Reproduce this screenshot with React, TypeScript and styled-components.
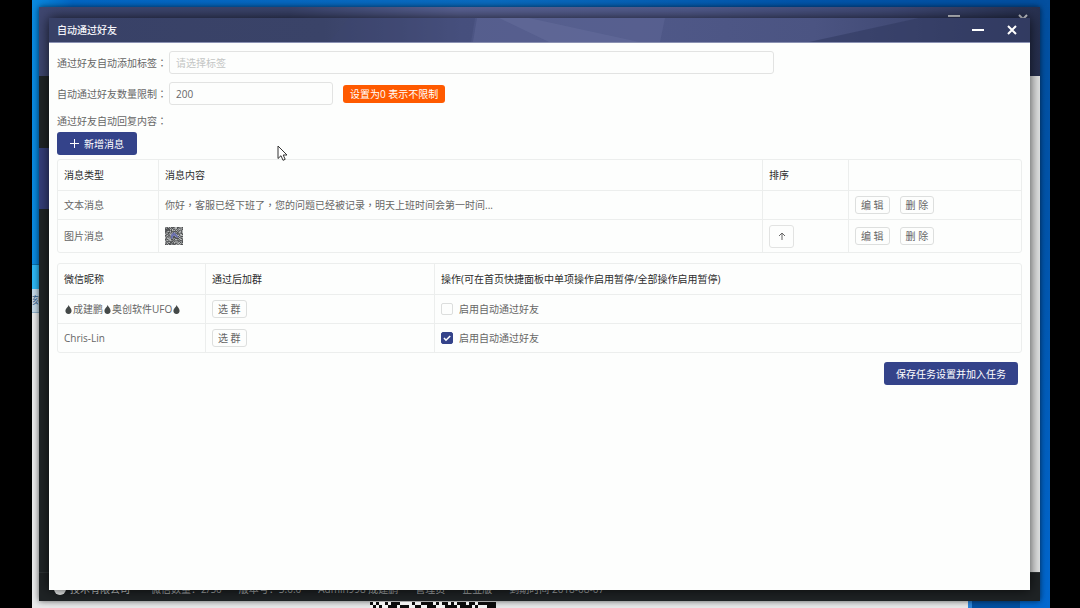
import React, { useState } from "react";
import styled, { createGlobalStyle } from "styled-components";

const GlobalStyle = createGlobalStyle`
  * { box-sizing: border-box; }
  body {
    margin: 0;
    background: #000;
    font-family: "Open Sans", "Noto Sans CJK SC", sans-serif;
    font-size: 10px;
    line-height: 16px;
    color: #666;
  }
  button, input { font: inherit; color: inherit; }
`;

const Desktop = styled.main`
  position: relative;
  height: 100vh;
  min-height: 420px;
  margin: 0 30px 0 32px;
  overflow: hidden;
  background: linear-gradient(90deg, #0a8be0 0, #0366c4 4%, #0b6cc0 45%, #0356ac 75%, #034fa0 100%);
`;

const RightGlow = styled.div`
  position: absolute;
  right: 0;
  top: 0;
  bottom: 0;
  width: 30px;
  background: linear-gradient(#034f9f, #0356ad 40%, #0368cf);
`;

const Browser = styled.div`
  position: absolute;
  left: 0;
  right: 78px;
  top: 264px;
  bottom: 0;
  background: #e8e9ea;
  border-right: 4px solid #2d86dc;
`;

const BrowserTitle = styled.div`
  height: 25px;
  background: #2db7f3;
  border-top: 1px solid #0b6ea8;
`;

const BrowserTab = styled.div`
  height: 24px;
  background: #c3d7e6;
  border-bottom: 1px solid #8fb0c8;
  color: #34608c;
  line-height: 22px;
  overflow: hidden;
  white-space: nowrap;
`;

const PageCode = styled.svg`
  position: absolute;
  left: 338px;
  bottom: 0;
  display: block;
`;

const AppWindow = styled.section`
  position: absolute;
  inset: 7px 10px 7px 7px;
  display: flex;
  flex-direction: column;
  background: #202527;
  box-shadow: 0 0 6px rgba(0, 0, 0, 0.6);
`;

const AppHeader = styled.div`
  display: flex;
  align-items: flex-start;
  justify-content: flex-end;
  gap: 58px;
  height: 69px;
  padding: 7px 12px 0 0;
  flex: none;
  background: linear-gradient(90deg, #3f4770 0, #3a436a 25%, #5a6293 42%, #525b8c 65%, #414a76 85%, #27304f 100%);
`;

const AppBody = styled.div`
  display: flex;
  flex: 1;
`;

const AppNav = styled.div`
  width: 120px;
  padding-top: 72px;
  background: #202527;
`;

const AppNavActive = styled.div`
  height: 61px;
  background: #36407c;
`;

const AppContent = styled.div`
  flex: 1;
  background: #e4e6e6;
`;

const AppFooter = styled.footer`
  display: flex;
  align-items: center;
  gap: 17px;
  height: 29px;
  padding: 4px 16px 0 15px;
  flex: none;
  background: #1f2325;
  border-top: 1px solid #2e3335;
  color: #a5a9ab;
  white-space: nowrap;
  overflow: hidden;
`;

const Company = styled.span`
  display: flex;
  align-items: center;
  gap: 4px;
  color: #c8cccd;
  margin-right: 4px;
`;

const Avatar = styled.i`
  width: 12px;
  height: 12px;
  border-radius: 50%;
  background: #f0f2f2;
`;

const Dialog = styled.section`
  position: absolute;
  inset: 18px 20px 18px 17px;
  display: flex;
  flex-direction: column;
  background: #fdfefd;
  box-shadow: 0 0 12px rgba(0, 0, 0, 0.75);
`;

const TitleBar = styled.header`
  position: relative;
  display: flex;
  align-items: center;
  justify-content: space-between;
  height: 25px;
  padding: 0 11px 0 8px;
  flex: none;
  border-bottom: 1px solid #8b92b3;
  background: linear-gradient(90deg, #384167 0, #3a4368 28%, #434c76 36%, #4c5584 42%, #4f5888 60%, #4b5482 78%, #3c456e 92%, #353e65 100%);
  overflow: hidden;
`;

const TitleShards = styled.svg`
  position: absolute;
  inset: 0;
  width: 100%;
  height: 100%;
`;

const Title = styled.h1`
  position: relative;
  margin: 0;
  font-size: 10px;
  font-weight: 500;
  color: #f4f5fa;
`;

const WindowButtons = styled.div`
  position: relative;
  display: flex;
  gap: 20px;
`;

const WindowButton = styled.button`
  display: grid;
  place-items: center;
  width: 14px;
  height: 14px;
  padding: 0;
  border: 0;
  background: none;
  color: #fff;
`;

const DialogBody = styled.form`
  display: flex;
  flex-direction: column;
  align-items: flex-start;
  padding: 8px 8px 0;
`;

const Field = styled.div`
  display: flex;
  align-items: center;
  align-self: stretch;
  height: 23px;
  margin-bottom: 8px;
`;

const FieldLabel = styled.label`
  width: 112px;
  flex: none;
`;

const TextBox = styled.input<{ $wide?: boolean }>`
  width: ${(p) => (p.$wide ? "calc(100% - 360px)" : "17%")};
  height: 23px;
  padding: 0 6px;
  border: 1px solid #e2e3e2;
  border-radius: 3px;
  background: #fdfefd;
  outline: none;
  &::placeholder { color: #c4c6c5; opacity: 1; }
`;

const Hint = styled.span`
  margin-left: 10px;
  padding: 1px 7px;
  border-radius: 3px;
  background: #ff5a00;
  color: #fff;
`;

const Caption = styled.p`
  margin: 0 0 3px;
`;

const Mark = styled.span`
  font-family: "Noto Sans CJK TC", sans-serif;
  line-height: 1;
`;

const PrimaryButton = styled.button<{ $end?: boolean }>`
  display: flex;
  align-items: center;
  gap: 5px;
  height: 23px;
  padding: 0 ${(p) => (p.$end ? 12 : 13)}px;
  border: 0;
  border-radius: 3px;
  background: #34438a;
  color: #fff;
  align-self: ${(p) => (p.$end ? "flex-end" : "flex-start")};
  margin: ${(p) => (p.$end ? "3px 4px 0 0" : "0")};
`;

const Table = styled.table`
  width: 100%;
  margin: 4px 0 6px;
  table-layout: fixed;
  border-collapse: separate;
  border-spacing: 0;
  border: 1px solid #eceeed;
  border-radius: 3px;
`;

const Th = styled.th<{ $w?: number }>`
  width: ${(p) => (p.$w ? p.$w + "px" : "auto")};
  height: 30px;
  padding: 0 6px;
  text-align: left;
  font-weight: 400;
  color: #2c2c2c;
  & + & { border-left: 1px solid #eceeed; }
`;

const Td = styled.td<{ $tall?: boolean }>`
  height: ${(p) => (p.$tall ? 33 : 29)}px;
  padding: 0 6px;
  border-top: 1px solid #eceeed;
  & + & { border-left: 1px solid #eceeed; }
`;

const Line = styled.div<{ $gap?: number }>`
  display: flex;
  align-items: center;
  gap: ${(p) => p.$gap ?? 0}px;
`;

const SmallButton = styled.button`
  height: 18px;
  padding: 0 5px;
  border: 1px solid #dddfde;
  border-radius: 3px;
  background: #fdfefd;
  line-height: 16px;
  white-space: pre;
`;

const ArrowButton = styled.button`
  display: grid;
  place-items: center;
  width: 25px;
  height: 23px;
  padding: 0;
  border: 1px solid #e2e3e2;
  border-radius: 3px;
  background: #fdfefd;
`;

const CheckLabel = styled.label`
  display: flex;
  align-items: center;
  gap: 6px;
`;

const CheckBox = styled.input`
  appearance: none;
  width: 12px;
  height: 12px;
  margin: 0;
  border: 1px solid #dcdedd;
  border-radius: 2px;
  background: #fdfefd;
  &:checked {
    border-color: #34438a;
    background: #34438a;
  }
`;

const CheckWrap = styled.span`
  position: relative;
  display: flex;
  svg { position: absolute; inset: 0; pointer-events: none; }
`;

const Pointer = styled.svg`
  position: absolute;
  left: 245px;
  top: 145px;
`;

function noise(x: number, y: number) {
  const v = Math.sin(x * 12.9898 + y * 78.233) * 43758.5453;
  return v - Math.floor(v);
}

function cells(cols: number, rows: number, size: number, fill: (x: number, y: number) => string | null) {
  const out: React.ReactElement[] = [];
  for (let y = 0; y < rows; y++)
    for (let x = 0; x < cols; x++) {
      const color = fill(x, y);
      if (color) out.push(<rect key={x + "-" + y} x={x * size} y={y * size} width={size} height={size} fill={color} />);
    }
  return out;
}

const GREYS = ["#4f5152", "#77797a", "#8f9192", "#b4b6b6", "#5f6163"];

function QrThumb() {
  return (
    <svg width="18" height="18" viewBox="0 0 18 18" role="img" aria-label="二维码">
      <rect width="18" height="18" fill="#808283" />
      {cells(18, 18, 1, (x, y) => GREYS[Math.floor(noise(x + 1, y + 3) * 5)])}
      <path d="M6 12V8l3-3 3 3 2 3-3-1-2-2-2 4z" fill="#6870b8" opacity=".85" />
    </svg>
  );
}

function Drop() {
  return (
    <svg width="9" height="9" viewBox="0 0 9 9" aria-hidden="true">
      <path d="M4.7 0C4.9 1.8 7.6 3.2 7.6 5.8A3.1 3.1 0 0 1 1.4 5.8C1.4 3.6 4.2 2.1 4.7 0z" fill="#444948" />
    </svg>
  );
}

function Minus({ color = "#fff" }: { color?: string }) {
  return (
    <svg width="12" height="4" viewBox="0 0 12 4" aria-hidden="true">
      <path d="M0 2h12" stroke={color} strokeWidth="2" />
    </svg>
  );
}

function Cross({ color = "#fff" }: { color?: string }) {
  return (
    <svg width="10" height="10" viewBox="0 0 10 10" aria-hidden="true">
      <path d="M1 1l8 8M9 1L1 9" stroke={color} strokeWidth="2" />
    </svg>
  );
}

function EnableBox({ id, initial }: { id: string; initial: boolean }) {
  const [on, setOn] = useState(initial);
  return (
    <CheckLabel htmlFor={id}>
      <CheckWrap>
        <CheckBox id={id} type="checkbox" checked={on} onChange={(e) => setOn(e.target.checked)} />
        {on && (
          <svg width="12" height="12" viewBox="0 0 12 12" aria-hidden="true">
            <path d="M3 6l2 2.2L9.2 4" fill="none" stroke="#fff" strokeWidth="1.6" />
          </svg>
        )}
      </CheckWrap>
      启用自动通过好友
    </CheckLabel>
  );
}

function RowActions() {
  return (
    <Line $gap={10}>
      <SmallButton type="button">编 辑</SmallButton>
      <SmallButton type="button">删 除</SmallButton>
    </Line>
  );
}

export default function App() {
  const [limit, setLimit] = useState("200");
  return (
    <>
      <GlobalStyle />
      <Desktop>
        <RightGlow />
        <Browser>
          <BrowserTitle />
          <BrowserTab>刻</BrowserTab>
        </Browser>
        <AppWindow>
          <AppHeader>
            <Minus color="#d5d8e0" />
            <Cross color="#d5d8e0" />
          </AppHeader>
          <AppBody>
            <AppNav>
              <AppNavActive />
            </AppNav>
            <AppContent />
          </AppBody>
          <AppFooter>
            <Company>
              <Avatar />
              技术有限公司
            </Company>
            <span>微信数量：2/50</span>
            <span>版本号：3.0.0</span>
            <span>Admin998 成建鹏</span>
            <span>管理员</span>
            <span>企业版</span>
            <span>到期时间 2018-08-07</span>
          </AppFooter>
        </AppWindow>
        <PageCode width="126" height="6" viewBox="0 0 126 6" aria-hidden="true">
          {cells(42, 2, 3, (x, y) => (noise(x + 5, y + 9) > 0.45 ? "#0c0c0c" : "#f2f2f2"))}
        </PageCode>
        <Dialog role="dialog" aria-labelledby="dialog-title">
          <TitleBar>
            <TitleShards viewBox="0 0 981 24" preserveAspectRatio="none" aria-hidden="true">
              <path d="M300 0h126l-4 24H280z" fill="#3d4670" opacity=".35" />
              <path d="M428 0h188l-5 24H424z" fill="#646c9c" opacity=".4" />
              <path d="M450 0h30l110 24h-90z" fill="#6d75a4" opacity=".35" />
              <path d="M981 0H870L760 24h221z" fill="#2f385e" opacity=".55" />
            </TitleShards>
            <Title id="dialog-title">自动通过好友</Title>
            <WindowButtons>
              <WindowButton type="button" aria-label="最小化">
                <Minus />
              </WindowButton>
              <WindowButton type="button" aria-label="关闭">
                <Cross />
              </WindowButton>
            </WindowButtons>
          </TitleBar>
          <DialogBody onSubmit={(e) => e.preventDefault()}>
            <Field>
              <FieldLabel htmlFor="tags">
                通过好友自动添加标签<Mark>：</Mark>
              </FieldLabel>
              <TextBox id="tags" $wide placeholder="请选择标签" />
            </Field>
            <Field>
              <FieldLabel htmlFor="limit">
                自动通过好友数量限制<Mark>：</Mark>
              </FieldLabel>
              <TextBox id="limit" value={limit} onChange={(e) => setLimit(e.target.value)} />
              <Hint>设置为0 表示不限制</Hint>
            </Field>
            <Caption>
              通过好友自动回复内容<Mark>：</Mark>
            </Caption>
            <PrimaryButton type="button">
              <svg width="9" height="9" viewBox="0 0 9 9" aria-hidden="true">
                <path d="M4.5 0v9M0 4.5h9" stroke="#fff" />
              </svg>
              新增消息
            </PrimaryButton>
            <Table>
              <thead>
                <tr>
                  <Th $w={100}>消息类型</Th>
                  <Th>消息内容</Th>
                  <Th $w={86}>排序</Th>
                  <Th $w={173} aria-label="操作" />
                </tr>
              </thead>
              <tbody>
                <tr>
                  <Td>文本消息</Td>
                  <Td>
                    你好<Mark>，</Mark>客服已经下班了<Mark>，</Mark>您的问题已经被记录<Mark>，</Mark>明天上班时间会第一时间...
                  </Td>
                  <Td />
                  <Td>
                    <RowActions />
                  </Td>
                </tr>
                <tr>
                  <Td $tall>图片消息</Td>
                  <Td $tall>
                    <Line>
                      <QrThumb />
                    </Line>
                  </Td>
                  <Td $tall>
                    <ArrowButton type="button" aria-label="上移">
                      <svg width="8" height="8" viewBox="0 0 8 8" aria-hidden="true">
                        <path d="M4 8V1M1 4l3-3 3 3" fill="none" stroke="#666" />
                      </svg>
                    </ArrowButton>
                  </Td>
                  <Td $tall>
                    <RowActions />
                  </Td>
                </tr>
              </tbody>
            </Table>
            <Table>
              <thead>
                <tr>
                  <Th $w={147}>微信昵称</Th>
                  <Th $w={229}>通过后加群</Th>
                  <Th>操作(可在首页快捷面板中单项操作启用暂停/全部操作启用暂停)</Th>
                </tr>
              </thead>
              <tbody>
                <tr>
                  <Td>
                    <Line>
                      <Drop />
                      成建鹏
                      <Drop />
                      奥创软件UFO
                      <Drop />
                    </Line>
                  </Td>
                  <Td>
                    <SmallButton type="button">选 群</SmallButton>
                  </Td>
                  <Td>
                    <EnableBox id="enable-1" initial={false} />
                  </Td>
                </tr>
                <tr>
                  <Td>Chris-Lin</Td>
                  <Td>
                    <SmallButton type="button">选 群</SmallButton>
                  </Td>
                  <Td>
                    <EnableBox id="enable-2" initial />
                  </Td>
                </tr>
              </tbody>
            </Table>
            <PrimaryButton type="submit" $end>
              保存任务设置并加入任务
            </PrimaryButton>
          </DialogBody>
        </Dialog>
        <Pointer width="12" height="17" viewBox="0 0 12 17" aria-hidden="true">
          <path d="M1 1v12.5l3-2.8 2 4.6 2.2-1-2-4.3H10z" fill="#fff" stroke="#333" />
        </Pointer>
      </Desktop>
    </>
  );
}
